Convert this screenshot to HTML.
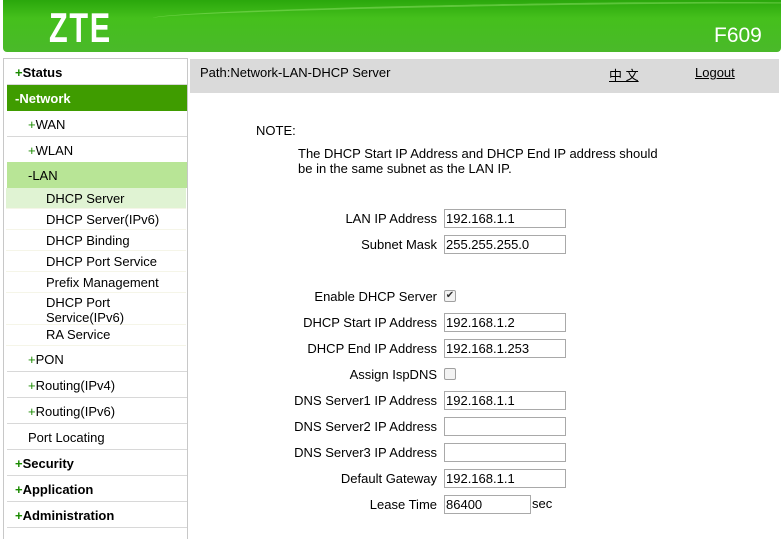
<!DOCTYPE html>
<html><head><meta charset="utf-8"><style>
body{margin:0;width:784px;height:532px;overflow:hidden;background:#fff;font-family:"Liberation Sans","Noto Sans CJK SC",sans-serif;font-size:13px;color:#000;position:relative}
.hdr{position:absolute;left:3px;top:0;width:778px;height:52px;background:linear-gradient(180deg,#2aa70c 0%,#45c01c 35%,#4ab92a 100%);border-radius:0 0 4px 4px;overflow:hidden}
.hdr .w{position:absolute;left:150px;top:4px;width:700px;height:14px;border-radius:50%;border-top:2px solid rgba(200,255,160,.3);transform:rotate(-1deg)}
.logo{position:absolute;left:46px;top:4px;color:#fff;font:bold 36px "Liberation Sans",sans-serif;transform:scale(0.85,1.15);transform-origin:left top;letter-spacing:2px}
.model{position:absolute;left:711px;top:24px;color:#fff;font-size:21px}
.side{position:absolute;left:3px;top:58px;width:183px;height:480px;border:1px solid #c8c8c8;border-bottom:none}
.it{position:absolute;left:3px;width:180px;border-bottom:1px solid #d8d8d8;box-sizing:border-box;height:26px;line-height:27px}
.b{font-weight:bold}
.p{color:#1a8a00;font-weight:bold}
.sub{position:absolute;left:3px;width:180px;padding-left:40px;box-sizing:border-box;line-height:15px;border-bottom:1px solid #f5f5e8}
.path{position:absolute;left:190px;top:59px;width:589px;height:34px;background:#dadada}
.path span{position:absolute;top:6px}
.lbl{position:absolute;right:347px;text-align:right;white-space:nowrap}
.in{position:absolute;left:444px;width:122px;height:19px;border:1px solid #a9a9a9;box-sizing:border-box;padding-left:1px;line-height:18px}
.cb{position:absolute;left:444px;width:12px;height:12px;border:1px solid #a0a0a0;border-radius:2px;box-sizing:border-box;background:#f3f3f3;font-size:10px;line-height:10px;text-align:center;color:#333}
</style></head><body>
<div class="hdr"><div class="w"></div><div class="logo">ZTE</div><div class="model">F609</div></div>
<div class="side"></div>
<div class="it b" style="top:59px;left:7px;padding-left:8px"><span class="p">+</span>Status</div>
<div class="it b" style="top:85px;left:7px;padding-left:8px;background:#3f9c00;color:#fff;border-bottom:1px solid #3f9c00">-Network</div>
<div class="it" style="top:111px;left:7px;padding-left:21px"><span style="color:#1a8a00">+</span>WAN</div>
<div class="it" style="top:137px;left:7px;padding-left:21px"><span style="color:#1a8a00">+</span>WLAN</div>
<div class="it" style="top:162px;left:7px;padding-left:21px;background:#b8e596;border-bottom:none">-LAN</div>
<div class="sub" style="top:188px;left:6px;height:21px;line-height:22px;background:#e0f3d3">DHCP Server</div>
<div class="sub" style="top:209px;left:6px;height:21px;line-height:22px">DHCP Server(IPv6)</div>
<div class="sub" style="top:230px;left:6px;height:21px;line-height:22px">DHCP Binding</div>
<div class="sub" style="top:251px;left:6px;height:21px;line-height:22px">DHCP Port Service</div>
<div class="sub" style="top:272px;left:6px;height:21px;line-height:22px">Prefix Management</div>
<div class="sub" style="top:294px;left:6px;height:31px;padding-top:1px">DHCP Port<br>Service(IPv6)</div>
<div class="sub" style="top:325px;left:6px;height:21px;line-height:19px">RA Service</div>
<div class="it" style="top:346px;left:7px;padding-left:21px"><span style="color:#1a8a00">+</span>PON</div>
<div class="it" style="top:372px;left:7px;padding-left:21px"><span style="color:#1a8a00">+</span>Routing(IPv4)</div>
<div class="it" style="top:398px;left:7px;padding-left:21px"><span style="color:#1a8a00">+</span>Routing(IPv6)</div>
<div class="it" style="top:424px;left:7px;padding-left:21px">Port Locating</div>
<div class="it b" style="top:450px;left:7px;padding-left:8px"><span class="p">+</span>Security</div>
<div class="it b" style="top:476px;left:7px;padding-left:8px"><span class="p">+</span>Application</div>
<div class="it b" style="top:502px;left:7px;padding-left:8px"><span class="p">+</span>Administration</div>
<div class="path"><span style="left:10px">Path:Network-LAN-DHCP Server</span><span style="left:419px;text-decoration:underline">中 文</span><span style="left:505px;text-decoration:underline">Logout</span></div>
<div style="position:absolute;left:256px;top:123px">NOTE:</div>
<div style="position:absolute;left:298px;top:146px;line-height:15px">The DHCP Start IP Address and DHCP End IP address should<br>be in the same subnet as the LAN IP.</div>
<div class="lbl" style="top:211px">LAN IP Address</div><div class="in" style="top:209px">192.168.1.1</div>
<div class="lbl" style="top:237px">Subnet Mask</div><div class="in" style="top:235px">255.255.255.0</div>
<div class="lbl" style="top:289px">Enable DHCP Server</div><div class="cb" style="top:290px">✔</div>
<div class="lbl" style="top:315px">DHCP Start IP Address</div><div class="in" style="top:313px">192.168.1.2</div>
<div class="lbl" style="top:341px">DHCP End IP Address</div><div class="in" style="top:339px">192.168.1.253</div>
<div class="lbl" style="top:367px">Assign IspDNS</div><div class="cb" style="top:368px"></div>
<div class="lbl" style="top:393px">DNS Server1 IP Address</div><div class="in" style="top:391px">192.168.1.1</div>
<div class="lbl" style="top:419px">DNS Server2 IP Address</div><div class="in" style="top:417px"></div>
<div class="lbl" style="top:445px">DNS Server3 IP Address</div><div class="in" style="top:443px"></div>
<div class="lbl" style="top:471px">Default Gateway</div><div class="in" style="top:469px">192.168.1.1</div>
<div class="lbl" style="top:497px">Lease Time</div><div class="in" style="top:495px;width:87px">86400</div>
<div style="position:absolute;left:532px;top:496px">sec</div>
</body></html>
